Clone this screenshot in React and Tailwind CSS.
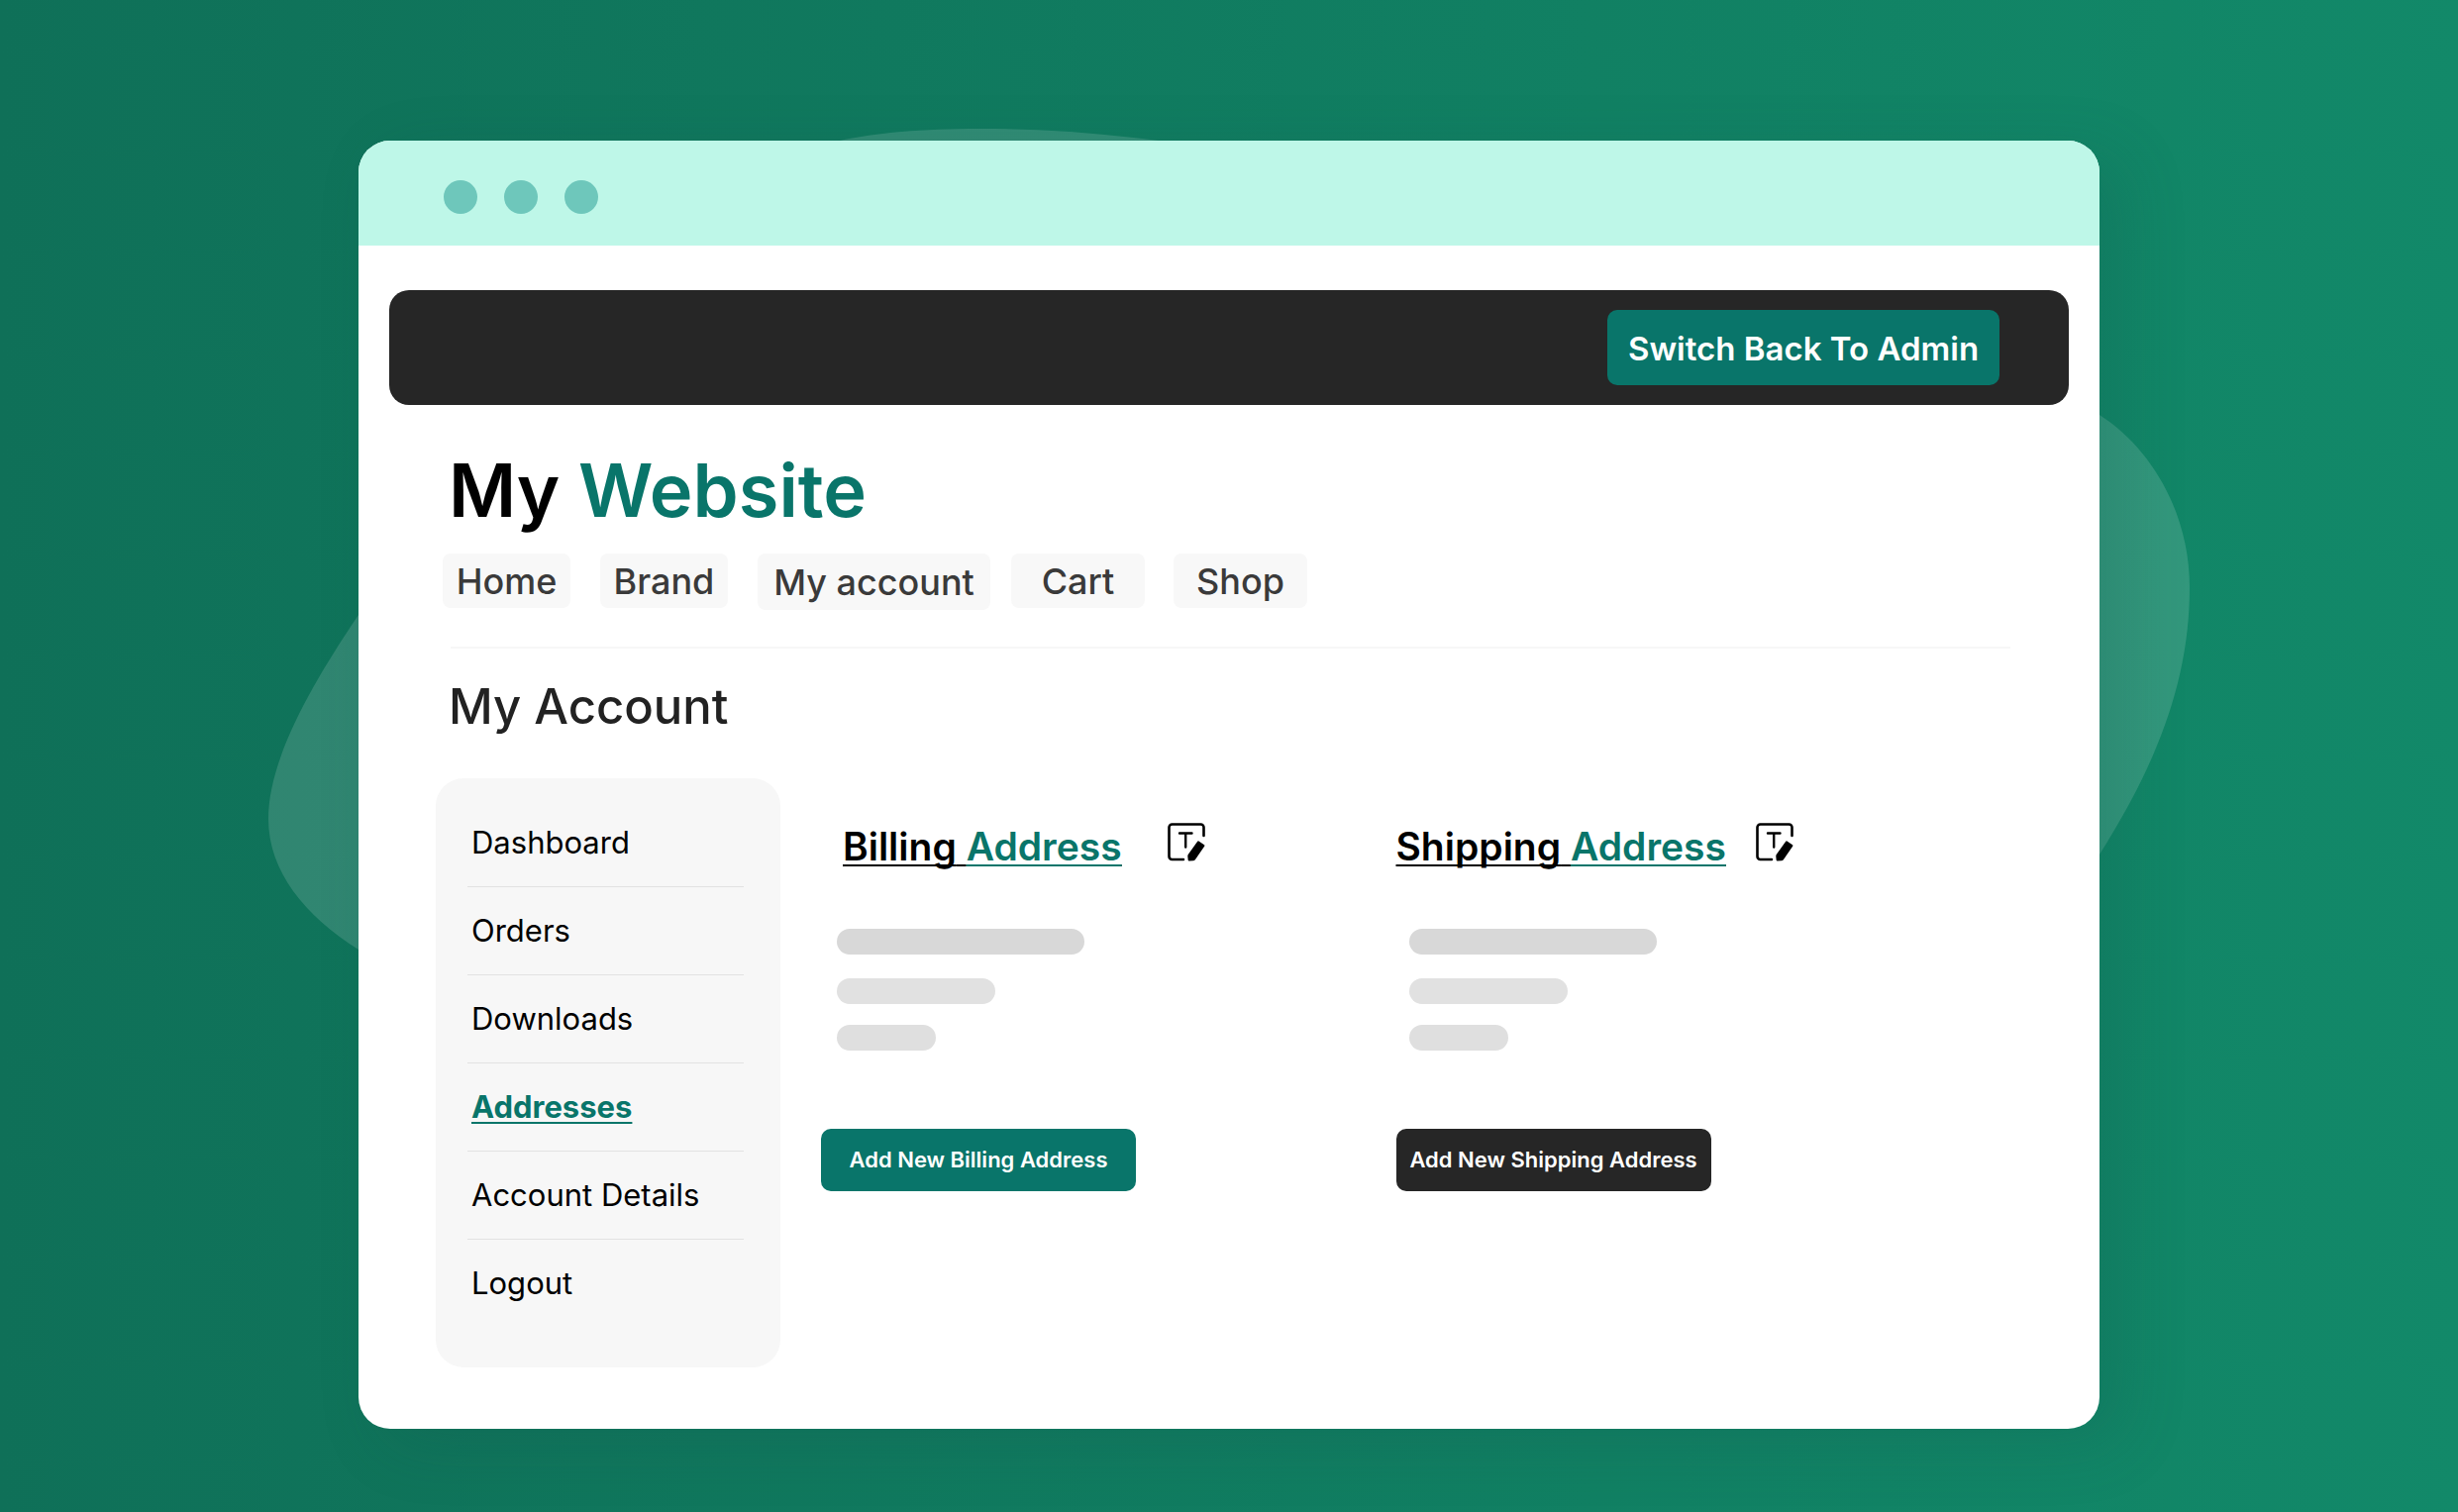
import React from "react";

const navLinks = [
  { name: "Home", style: "w-[129px] h-[55px]" },
  { name: "Brand", style: "w-[129px] h-[55px] ml-[30px]" },
  { name: "My account", style: "w-[235px] h-[57px] ml-[30px]" },
  { name: "Cart", style: "w-[135px] h-[55px] ml-[21px]" },
  { name: "Shop", style: "w-[135px] h-[55px] ml-[29px]" },
];

const menuItems = [
  "Dashboard",
  "Orders",
  "Downloads",
  "Addresses",
  "Account Details",
  "Logout",
];

const addresses = [
  {
    kind: "Billing",
    headingStyle: "pl-[22px] gap-[46px]",
    linesStyle: "pl-4",
    buttonStyle: "bg-[#09756a]",
  },
  {
    kind: "Shipping",
    headingStyle: "gap-[30px]",
    linesStyle: "pl-[13px]",
    buttonStyle: "bg-[#262626]",
  },
];

const isNotActiveStyle = "text-black";
const isActiveStyle =
  "text-[#09756a] font-bold underline decoration-2 underline-offset-4";

const EditIcon = () => (
  <svg width="38" height="39" viewBox="0 0 38 39" fill="none" aria-hidden="true">
    <path
      d="M36.5 13V4.5a3 3 0 0 0-3-3h-29a3 3 0 0 0-3 3v29.500a3 3 0 0 0 3 3H16"
      stroke="black"
      strokeWidth="2.6"
      strokeLinecap="round"
    />
    <path
      d="M12 10.500h12.500M18.200 10.500v14"
      stroke="black"
      strokeWidth="2.4"
      strokeLinecap="round"
    />
    <path
      d="M31.500 18.500 37 22.300a1 1 0 0 1 .3 1.300L28 37a3 3 0 0 1-2.300 1.300l-4 .2a1 1 0 0 1-1-.8l-.4-3.700a3 3 0 0 1 .6-2.200L30.200 18.800a1 1 0 0 1 1.300-.3Z"
      fill="black"
    />
  </svg>
);

const Backdrop = () => (
  <svg
    className="absolute inset-0 w-full h-full"
    viewBox="0 0 2482 1527"
    preserveAspectRatio="none"
    aria-hidden="true"
  >
    <path
      d="M362 621C310 698 271 770 271 827C271 880 308 925 362 959C700 1160 1800 1300 2120 863C2180 768 2211 685 2211 593C2211 518 2172 452 2120 419C1800 330 1400 130 990 130C930 130 885 134 848 142C700 174 500 400 362 621Z"
      fill="white"
      fillOpacity="0.14"
    />
  </svg>
);

const AddressCard = ({ address }) => {
  return (
    <section className="flex-1 flex flex-col items-start">
      <div className={`flex items-start ${address.headingStyle}`}>
        <h3 className="text-[39px] leading-[48px] font-semibold underline decoration-2 underline-offset-4 [text-decoration-skip-ink:none] whitespace-nowrap">
          {address.kind}{" "}
          <span className="text-[#09756a] underline decoration-2 underline-offset-4 [text-decoration-skip-ink:none]">
            Address
          </span>
        </h3>
        <button type="button" aria-label={`Edit ${address.kind} Address`}>
          <EditIcon />
        </button>
      </div>
      <div className={`mt-[59px] ${address.linesStyle}`}>
        <div className="w-[250px] h-[26px] rounded-full bg-[#d8d8d8]" />
        <div className="w-[160px] h-[26px] mt-6 rounded-full bg-[#e1e1e1]" />
        <div className="w-[100px] h-[26px] mt-[21px] rounded-full bg-[#dfdfdf]" />
      </div>
      <button
        type="button"
        className={`mt-[79px] w-[318px] h-[63px] rounded-[10px] text-white text-[22px] font-semibold whitespace-nowrap ${address.buttonStyle}`}
      >
        Add New {address.kind} Address
      </button>
    </section>
  );
};

const App = () => {
  return (
    <div className="relative min-h-screen flex px-[362px] pt-[142px] pb-[84px] bg-linear-to-r from-[#0f7058] to-[#128969] font-['Inter',sans-serif]">
      <Backdrop />
      <div className="relative flex-1 flex flex-col bg-white rounded-[32px] overflow-hidden shadow-[24px_16px_64px_rgba(20,80,75,0.2)]">
        <div className="h-[106px] pt-2 flex items-center gap-[27px] pl-[86px] bg-[#bef7e8]">
          <span className="size-[34px] rounded-full bg-[#6ec7bb]" />
          <span className="size-[34px] rounded-full bg-[#6ec7bb]" />
          <span className="size-[34px] rounded-full bg-[#6ec7bb]" />
        </div>

        <div className="mt-[45px] mx-[31px] h-[116px] flex items-center justify-end pr-[70px] rounded-[20px] bg-[#262626]">
          <button
            type="button"
            className="w-[396px] h-[76px] pt-1 rounded-[10px] bg-[#09756a] text-white text-[33px] font-semibold whitespace-nowrap"
          >
            Switch Back To Admin
          </button>
        </div>

        <header className="mt-[42px] pl-[85px] pr-[90px]">
          <h1 className="pl-[6px] text-[74px] leading-[88px] font-semibold">
            My <span className="text-[#09756a]">Website</span>
          </h1>
          <nav className="mt-5 flex items-start">
            {navLinks.map((link) => (
              <a
                key={link.name}
                href="#"
                className={`flex items-center justify-center rounded-lg bg-[#f8f8f8] text-[#3a3a3a] text-[36px] font-medium whitespace-nowrap ${link.style}`}
              >
                {link.name}
              </a>
            ))}
          </nav>
          <hr className="ml-2 mt-[37px] border-t-2 border-[#f7f7f7]" />
        </header>

        <h2 className="mt-[29px] pl-[91px] text-[49px] leading-[60px] font-medium text-[#222222]">
          My Account
        </h2>

        <main className="mt-[42px] mb-[62px] pl-[78px] pr-[130px] flex items-start gap-[41px]">
          <aside className="w-[348px] pl-8 pr-[37px] pt-[21px] pb-10 rounded-[28px] bg-[#f7f7f7]">
            <ul className="divide-y divide-[#e2e2e2]">
              {menuItems.map((item) => (
                <li key={item} className="h-[89px] pl-1 flex items-center text-[31px]">
                  <a
                    href="#"
                    className={item === "Addresses" ? isActiveStyle : isNotActiveStyle}
                  >
                    {item}
                  </a>
                </li>
              ))}
            </ul>
          </aside>
          <div className="flex-1 flex pt-[45px]">
            {addresses.map((address) => (
              <AddressCard key={address.kind} address={address} />
            ))}
          </div>
        </main>
      </div>
    </div>
  );
};

export default App;
